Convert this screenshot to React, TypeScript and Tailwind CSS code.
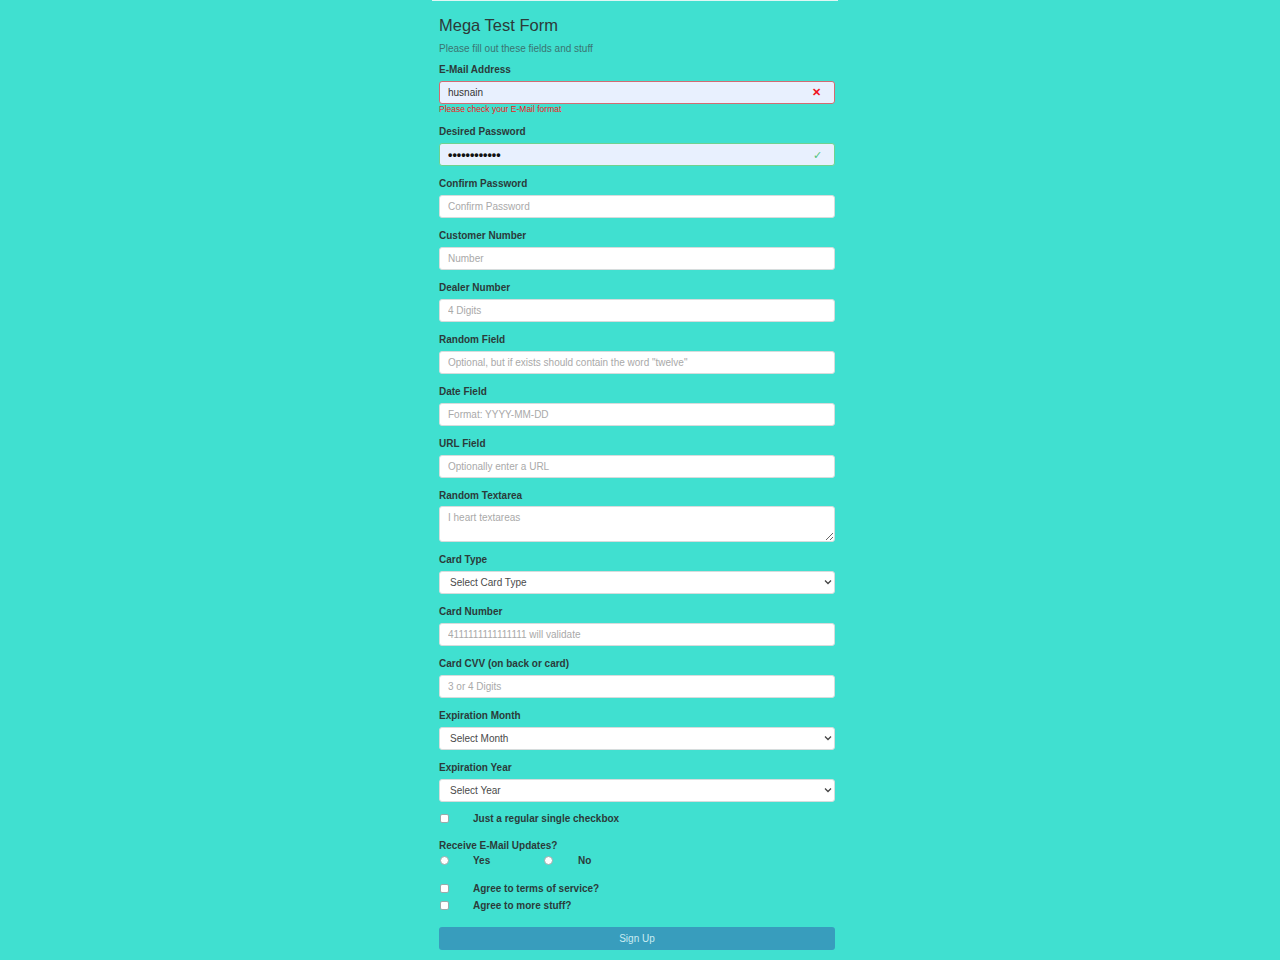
import React from "react";

const inputBase =
  "block w-full h-[23px] rounded-[3px] border border-[#d6dcdc] bg-white px-[8px] text-[10px] text-[#444] placeholder:text-[#a9a9a9] outline-none";

function Label({ children }: { children: React.ReactNode }) {
  return <div className="h-[14px] leading-[14px] text-[10px] font-bold text-[#2b3b3a] mb-[4px]">{children}</div>;
}

function Field({ label, placeholder }: { label: string; placeholder: string }) {
  return (
    <div className="mb-[11px]">
      <Label>{label}</Label>
      <input className={inputBase} placeholder={placeholder} readOnly />
    </div>
  );
}

function SelectField({ label, text }: { label: string; text: string }) {
  return (
    <div className="mb-[11px]">
      <Label>{label}</Label>
      <div className="relative">
        <div className="flex items-center w-full h-[23px] rounded-[3px] border border-[#d6dcdc] bg-white pl-[10px] text-[10px] text-[#4a4a4a]">
          {text}
        </div>
        <svg className="absolute right-[3px] top-[8px]" width="8" height="6" viewBox="0 0 8 6">
          <path d="M1 1.5 L4 4.5 L7 1.5" fill="none" stroke="#444" strokeWidth="1.3" />
        </svg>
      </div>
    </div>
  );
}

function Box({ round }: { round?: boolean }) {
  return (
    <span
      className={
        "inline-block w-[9px] h-[9px] bg-white border border-[#9aa] shrink-0 " +
        (round ? "rounded-full" : "rounded-[2px]")
      }
    />
  );
}

export default function App() {
  return (
    <div className="min-h-screen bg-[#40e0d0] font-['Liberation_Sans',Arial,sans-serif] text-[#333]">
      <div className="flex justify-center pr-[6px]">
        <div className="w-[410px] px-[7px] pb-[10px]">
          <div className="-mx-[7px] w-[406px] h-px bg-[#dff7f4]" />
          <h1 className="mt-[13px] text-[16.5px] leading-[22px] font-normal text-[#2c3a39]">Mega Test Form</h1>
          <p className="mt-[6px] text-[10px] leading-[14px] text-[#3b7470]">Please fill out these fields and stuff</p>

          <div className="mt-[7px]">
            <div className="mb-[11px]">
              <Label>E-Mail Address</Label>
              <div className="relative">
                <input
                  className="block w-full h-[23px] rounded-[3px] border border-[#d26b72] bg-[#e8f0fe] px-[8px] text-[10px] text-[#333] outline-none"
                  value="husnain"
                  readOnly
                />
                <span className="absolute right-[14px] top-[5px] text-[11px] leading-[12px] font-bold text-[#f0141e]">✕</span>
              </div>
              <div className="h-[10px] leading-[10px] text-[8.5px] text-[#f01818]">Please check your E-Mail format</div>
            </div>

            <div className="mb-[11px]">
              <Label>Desired Password</Label>
              <div className="relative">
                <input
                  type="password"
                  className="block w-full h-[23px] rounded-[3px] border border-[#6fd28f] bg-[#e8f0fe] px-[8px] text-[12.5px] font-bold text-[#111] outline-none"
                  value="hunter123456"
                  readOnly
                />
                <span className="absolute right-[13px] top-[6px] text-[11px] leading-[12px] text-[#52c47c]">✓</span>
              </div>
            </div>

            <Field label="Confirm Password" placeholder="Confirm Password" />
            <Field label="Customer Number" placeholder="Number" />
            <Field label="Dealer Number" placeholder="4 Digits" />
            <Field label="Random Field" placeholder={'Optional, but if exists should contain the word "twelve"'} />
            <Field label="Date Field" placeholder="Format: YYYY-MM-DD" />
            <Field label="URL Field" placeholder="Optionally enter a URL" />

            <div className="mb-[11px]">
              <Label>Random Textarea</Label>
              <textarea
                className="-mt-[1px] block w-full h-[36px] rounded-[3px] border border-[#d6dcdc] bg-white px-[8px] pt-[5px] text-[10px] leading-[12px] text-[#444] placeholder:text-[#a9a9a9] outline-none"
                placeholder="I heart textareas"
                readOnly
              />
            </div>

            <SelectField label="Card Type" text="Select Card Type" />
            <Field label="Card Number" placeholder="4111111111111111 will validate" />
            <Field label="Card CVV (on back or card)" placeholder="3 or 4 Digits" />
            <SelectField label="Expiration Month" text="Select Month" />
            <SelectField label="Expiration Year" text="Select Year" />
          </div>

          <div className="-mt-[2px] flex items-center h-[14px] pl-[1px] text-[10px] font-bold text-[#2b3b3a]">
            <Box />
            <span className="ml-[24px]">Just a regular single checkbox</span>
          </div>

          <div className="mt-[14px] h-[14px] leading-[14px] text-[10px] font-bold text-[#2b3b3a]">Receive E-Mail Updates?</div>
          <div className="flex h-[14px] items-center pl-[1px] text-[10px] font-bold text-[#2b3b3a]">
            <div className="flex items-center w-[104px]">
              <Box round />
              <span className="ml-[24px]">Yes</span>
            </div>
            <div className="flex items-center">
              <Box round />
              <span className="ml-[25px]">No</span>
            </div>
          </div>

          <div className="mt-[14px] flex flex-col gap-[3px] pl-[1px] text-[10px] font-bold text-[#2b3b3a]">
            <div className="flex items-center h-[14px]">
              <Box />
              <span className="ml-[24px]">Agree to terms of service?</span>
            </div>
            <div className="flex items-center h-[14px]">
              <Box />
              <span className="ml-[24px]">Agree to more stuff?</span>
            </div>
          </div>

          <button className="mt-[15px] block w-full h-[23px] rounded-[3px] bg-[#389dbd] text-[10px] text-[#c9ecf2]">
            Sign Up
          </button>
        </div>
      </div>
    </div>
  );
}
